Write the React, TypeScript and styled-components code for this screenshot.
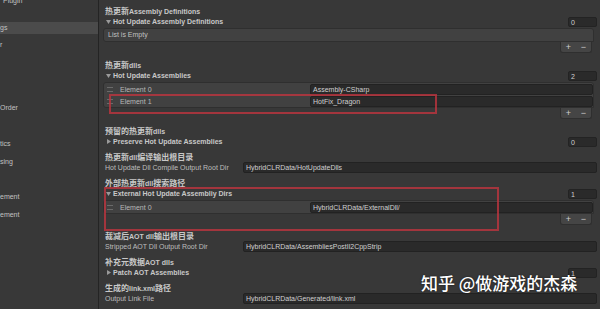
import React from "react";
import styled, { createGlobalStyle } from "styled-components";

const Global = createGlobalStyle`
  html, body { margin: 0; padding: 0; background: #383838; }
  body {
    width: 600px; height: 309px; overflow: hidden;
    font-family: "Liberation Sans", "Noto Sans CJK SC", sans-serif;
    font-size: 7px; color: #c4c4c4;
  }
`;

const Window = styled.div`
  position: relative;
  display: flex;
  width: 600px;
  height: 309px;
  overflow: hidden;
  background: #383838;
`;

const Sidebar = styled.div`
  width: 98px;
  flex: none;
  border-right: 1px solid #242424;
  display: flex;
  flex-direction: column;
`;

const NavItem = styled.div<{ $mt: number; $pl?: number; $selected?: boolean }>`
  height: 12px;
  line-height: 12px;
  margin-top: ${(p) => p.$mt}px;
  padding-left: ${(p) => p.$pl ?? 0}px;
  background: ${(p) => (p.$selected ? "#4b4b4b" : "transparent")};
  white-space: nowrap;
  color: #c2c2c2;
`;

const Panel = styled.div`
  flex: 1;
  min-width: 0;
  display: flex;
  flex-direction: column;
  padding: 6px 3px 0 6px;
`;

const Section = styled.div<{ $after?: number }>`
  display: flex;
  flex-direction: column;
  margin-bottom: ${(p) => p.$after ?? 5}px;
`;

const Header = styled.div`
  height: 10px;
  line-height: 10px;
  font-weight: bold;
  color: #c8c8c8;
  white-space: nowrap;
`;

const Han = styled.span`
  font-size: 8px;
  font-family: "Noto Sans CJK SC", sans-serif;
`;

const Row = styled.div`
  height: 11px;
  display: flex;
  align-items: center;
  white-space: nowrap;
`;

const Foldout = styled.div`
  display: flex;
  align-items: center;
  gap: 2px;
  padding-left: 1px;
  font-weight: bold;
  color: #c8c8c8;
`;

const ArrowBox = styled.span`
  width: 5px;
  display: inline-flex;
  justify-content: center;
`;

const SizeField = styled.div`
  margin-left: auto;
  width: 29px;
  height: 10px;
  line-height: 10px;
  background: #2a2a2a;
  border: 1px solid #232323;
  border-radius: 2px;
  box-sizing: border-box;
  padding-left: 2px;
  color: #d0d0d0;
`;

const FieldLabel = styled.div`
  width: 138px;
  flex: none;
  color: #bdbdbd;
`;

const TextField = styled.div`
  flex: 1;
  height: 11px;
  line-height: 10px;
  background: #2a2a2a;
  border: 1px solid #222;
  border-radius: 2px;
  box-sizing: border-box;
  padding-left: 2px;
  color: #d0d0d0;
  white-space: nowrap;
  overflow: hidden;
`;

const ListBox = styled.div<{ $empty?: boolean }>`
  margin: 1px 3px 0 -2px;
  background: #414141;
  border: 1px solid #2f2f2f;
  border-radius: 3px 3px 0 3px;
  min-height: ${(p) => (p.$empty ? 12 : 0)}px;
  display: flex;
  flex-direction: column;
`;

const EmptyText = styled.div`
  height: 12px;
  line-height: 12px;
  padding-left: 4px;
  color: #c0c0c0;
`;

const ListRow = styled.div`
  height: 12px;
  display: flex;
  align-items: center;
  padding-left: 3px;
`;

const Handle = styled.span`
  width: 6px;
  height: 3px;
  border-top: 1px solid #6a6a6a;
  border-bottom: 1px solid #6a6a6a;
  margin-right: 7px;
`;

const ElementLabel = styled.div`
  width: 190px;
  flex: none;
  color: #b8b8b8;
`;

const ElementField = styled(TextField)`
  margin-right: 0;
`;

const Footer = styled.div`
  align-self: flex-end;
  margin-right: 5px;
  width: 32px;
  height: 11px;
  background: #454545;
  border: 1px solid #2f2f2f;
  border-top: none;
  border-radius: 0 0 3px 3px;
  box-sizing: border-box;
  display: flex;
  align-items: center;
  justify-content: space-around;
  color: #cfcfcf;
  font-size: 9px;
  line-height: 9px;
`;

const Mark = styled.div<{ $x: number; $y: number; $w: number; $h: number }>`
  position: absolute;
  left: ${(p) => p.$x}px;
  top: ${(p) => p.$y}px;
  width: ${(p) => p.$w}px;
  height: ${(p) => p.$h}px;
  border: 2px solid rgba(190, 52, 62, 0.8);
  box-sizing: border-box;
  pointer-events: none;
`;

const Watermark = styled.div`
  position: absolute;
  left: 421px;
  top: 273px;
  font-family: "Noto Sans CJK SC", sans-serif;
  font-size: 17px;
  line-height: 20px;
  font-weight: 500;
  color: #ffffff;
  white-space: nowrap;
  text-shadow: 0 0 2px rgba(0, 0, 0, 0.6);
`;

const Arrow = ({ open }: { open: boolean }) => (
  <ArrowBox>
    {open ? (
      <svg width="5" height="4" viewBox="0 0 5 4">
        <path d="M0 0 L5 0 L2.5 4 Z" fill="#9a9a9a" />
      </svg>
    ) : (
      <svg width="4" height="5" viewBox="0 0 4 5">
        <path d="M0 0 L4 2.5 L0 5 Z" fill="#9a9a9a" />
      </svg>
    )}
  </ArrowBox>
);

const FoldRow = ({ label, open, size }: { label: string; open: boolean; size: string }) => (
  <Row>
    <Foldout>
      <Arrow open={open} />
      {label}
    </Foldout>
    <SizeField>{size}</SizeField>
  </Row>
);

const ListFooter = () => (
  <Footer>
    <span>+</span>
    <span>−</span>
  </Footer>
);

const Element = ({ i, value }: { i: number; value: string }) => (
  <ListRow>
    <Handle />
    <ElementLabel>Element {i}</ElementLabel>
    <ElementField>{value}</ElementField>
  </ListRow>
);

const nav = [
  { t: "Plugin", mt: -5, pl: 3 },
  { t: "gs", mt: 15, sel: true },
  { t: "r", mt: 5 },
  { t: "Order", mt: 51 },
  { t: "tics", mt: 24 },
  { t: "sing", mt: 6 },
  { t: "ement", mt: 23 },
  { t: "ement", mt: 6 },
];

export default function App() {
  return (
    <Window>
      <Global />
      <Sidebar>
        {nav.map((n, i) => (
          <NavItem key={i} $mt={n.mt} $pl={n.pl} $selected={n.sel}>
            {n.t}
          </NavItem>
        ))}
      </Sidebar>
      <Panel>
        <Section $after={7}>
          <Header>
            <Han>热更新</Han>Assembly Definitions
          </Header>
          <FoldRow label="Hot Update Assembly Definitions" open size="0" />
          <ListBox $empty>
            <EmptyText>List is Empty</EmptyText>
          </ListBox>
          <ListFooter />
        </Section>

        <Section $after={7}>
          <Header>
            <Han>热更新</Han>dlls
          </Header>
          <FoldRow label="Hot Update Assemblies" open size="2" />
          <ListBox>
            <Element i={0} value="Assembly-CSharp" />
            <Element i={1} value="HotFix_Dragon" />
          </ListBox>
          <ListFooter />
        </Section>

        <Section>
          <Header>
            <Han>预留的热更新</Han>dlls
          </Header>
          <FoldRow label="Preserve Hot Update Assemblies" open={false} size="0" />
        </Section>

        <Section>
          <Header>
            <Han>热更新</Han>dll<Han>编译输出根目录</Han>
          </Header>
          <Row>
            <FieldLabel>Hot Update Dll Compile Output Root Dir</FieldLabel>
            <TextField>HybridCLRData/HotUpdateDlls</TextField>
          </Row>
        </Section>

        <Section $after={6}>
          <Header>
            <Han>外部热更新</Han>dll<Han>搜索路径</Han>
          </Header>
          <FoldRow label="External Hot Update Assembliy Dirs" open size="1" />
          <ListBox>
            <Element i={0} value="HybridCLRData/ExternalDll/" />
          </ListBox>
          <ListFooter />
        </Section>

        <Section>
          <Header>
            <Han>裁减后</Han>AOT dll<Han>输出根目录</Han>
          </Header>
          <Row>
            <FieldLabel>Stripped AOT Dll Output Root Dir</FieldLabel>
            <TextField>HybridCLRData/AssembliesPostIl2CppStrip</TextField>
          </Row>
        </Section>

        <Section>
          <Header>
            <Han>补充元数据</Han>AOT dlls
          </Header>
          <FoldRow label="Patch AOT Assemblies" open={false} size="1" />
        </Section>

        <Section>
          <Header>
            <Han>生成的</Han>link.xml<Han>路径</Han>
          </Header>
          <Row>
            <FieldLabel>Output Link File</FieldLabel>
            <TextField>HybridCLRData/Generated/link.xml</TextField>
          </Row>
        </Section>
      </Panel>

      <Mark $x={109} $y={94} $w={328} $h={20} />
      <Mark $x={104} $y={187} $w={395} $h={44} />
      <Watermark>知乎 @做游戏的杰森</Watermark>
    </Window>
  );
}
